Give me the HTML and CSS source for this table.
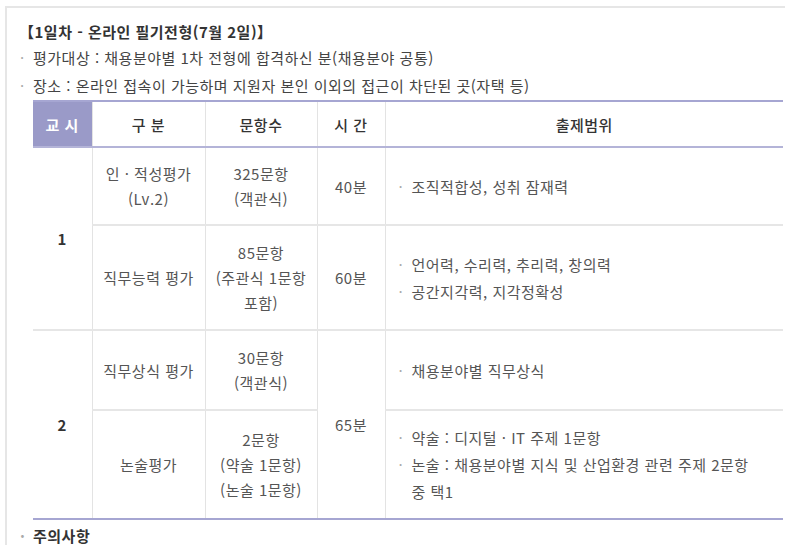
FILE: index.html
```html
<!DOCTYPE html>
<html lang="ko">
<head>
<meta charset="utf-8">
<link rel="stylesheet" href="styles.css">
</head>
<body>
<div class="frame">
  <div class="content">
    <h3 class="title">【1일차 - 온라인 필기전형(7월 2일)】</h3>
    <ul class="dots">
      <li>평가대상 : 채용분야별 1차 전형에 합격하신 분(채용분야 공통)</li>
      <li>장소 : 온라인 접속이 가능하며 지원자 본인 이외의 접근이 차단된 곳(자택 등)</li>
    </ul>
    <table class="exam">
      <colgroup>
        <col class="c1"><col class="c2"><col class="c3"><col class="c4"><col class="c5">
      </colgroup>
      <thead>
        <tr>
          <th class="first">교 시</th>
          <th>구 분</th>
          <th>문항수</th>
          <th>시 간</th>
          <th>출제범위</th>
        </tr>
      </thead>
      <tbody>
        <tr class="r1">
          <td rowspan="2" class="period">1</td>
          <td>인 · 적성평가<br>(Lv.2)</td>
          <td>325문항<br>(객관식)</td>
          <td>40분</td>
          <td class="scope"><ul class="dots"><li>조직적합성, 성취 잠재력</li></ul></td>
        </tr>
        <tr class="r2">
          <td>직무능력 평가</td>
          <td>85문항<br>(주관식 1문항 포함)</td>
          <td>60분</td>
          <td class="scope"><ul class="dots"><li>언어력, 수리력, 추리력, 창의력</li><li>공간지각력, 지각정확성</li></ul></td>
        </tr>
        <tr class="r3">
          <td rowspan="2" class="period">2</td>
          <td>직무상식 평가</td>
          <td>30문항<br>(객관식)</td>
          <td rowspan="2">65분</td>
          <td class="scope"><ul class="dots"><li>채용분야별 직무상식</li></ul></td>
        </tr>
        <tr class="r4">
          <td>논술평가</td>
          <td>2문항<br>(약술 1문항)<br>(논술 1문항)</td>
          <td class="scope"><ul class="dots"><li>약술 : 디지털 · IT 주제 1문항</li><li>논술 : 채용분야별 지식 및 산업환경 관련 주제 2문항 중 택1</li></ul></td>
        </tr>
      </tbody>
    </table>
    <ul class="dots notice">
      <li>주의사항</li>
    </ul>
  </div>
</div>
</body>
</html>
```
FILE: styles.css
```css
html, body {
  margin: 0;
  padding: 0;
  background: #fff;
}
body {
  font-family: "Noto Sans CJK KR", "Noto Sans", sans-serif;
  font-size: 15px;
  color: #444;
  letter-spacing: 0.5px;
}
.frame {
  margin: 6px 15px 0 5px;
  border-top: 2px solid #e6e6e6;
  border-left: 2px solid #e6e6e6;
  height: 600px;
}
.content {
  padding: 12px 0 0 12px;
}
.title {
  margin: 0;
  font-size: 15px;
  font-weight: 700;
  color: #333;
  line-height: 24px;
}
.dots {
  list-style: none;
  margin: 0;
  padding: 0;
}
.dots li {
  position: relative;
  padding-left: 14px;
  line-height: 28px;
}
.dots li::before {
  content: "·";
  position: absolute;
  left: 1px;
  top: 0;
  color: #aaa;
}
.exam {
  margin: 0 0 0 14px;
  width: 750px;
  border-collapse: collapse;
  table-layout: fixed;
  border-top: 2px solid #a6a6d2;
  border-bottom: 2px solid #a6a6d2;
  color: #555;
}
.c1 { width: 59px; }
.c2 { width: 113px; }
.c3 { width: 112px; }
.c4 { width: 68px; }
.c5 { width: 398px; }
.exam th {
  height: 44px;
  font-weight: 500;
  color: #333;
  border-bottom: 2px solid #b4b4d8;
  border-left: 1px solid #e3e3e3;
  padding: 0;
  text-align: center;
}
.exam th.first {
  background: #9a9ac8;
  color: #fff;
  font-weight: 700;
  border-left: none;
}
.exam td {
  text-align: center;
  vertical-align: middle;
  border-left: 1px solid #e3e3e3;
  border-top: 2px solid #e6e6e6;
  line-height: 25px;
  padding: 0 6px;
}
.exam td.period {
  border-left: none;
  font-weight: 700;
  color: #333;
}
.exam td.scope {
  text-align: left;
  padding: 0 32px 0 12px;
}
.exam td.scope .dots li {
  line-height: 27px;
}
.r1 { height: 78px; }
.r2 { height: 105px; }
.r3 { height: 80px; }
.r4 { height: 109px; }
.notice {
  margin-top: 2px;
}
.notice li {
  font-weight: 700;
  color: #333;
}
```
